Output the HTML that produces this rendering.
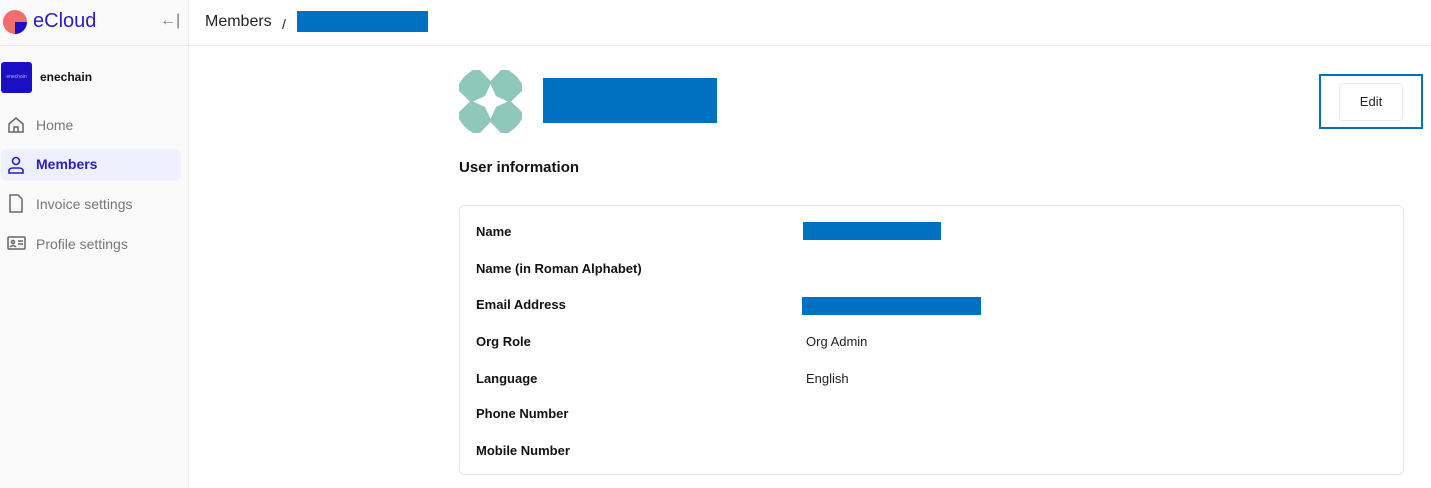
<!DOCTYPE html>
<html><head><style>
*{margin:0;padding:0;box-sizing:border-box}
body{width:1431px;height:488px;overflow:hidden;background:#fff;font-family:"Liberation Sans",Arial,sans-serif;position:relative}
.a{position:absolute}
.side{left:0;top:0;width:189px;height:488px;background:#fafafa;border-right:1px solid #ececec}
.nav{font-size:14px;color:#777}
.lbl{font-size:13px;font-weight:bold;color:#111;left:476px}
.val{font-size:13px;color:#222;left:806px}
.blue{background:#0070c0}
</style></head><body>
<div class="a side"></div>
<div class="a" style="left:0;top:45px;width:1431px;height:1px;background:#ececec"></div>
<svg class="a" style="left:3px;top:10px" width="24" height="24" viewBox="0 0 24 24"><circle cx="12" cy="12" r="12" fill="#f26d6d"/><path d="M12 12H24A12 12 0 0 1 12 24Z" fill="#1a0fc4"/></svg>
<div class="a" style="left:33px;top:10px;font-size:20px;color:#2a1cc0">eCloud</div>
<div class="a" style="left:160px;top:12px;font-size:16px;color:#777">&larr;|</div>
<div class="a" style="left:205px;top:13px;font-size:16px;color:#222">Members</div>
<div class="a" style="left:282px;top:16px;font-size:14px;color:#222">/</div>
<div class="a blue" style="left:297px;top:11px;width:131px;height:21px"></div>
<div class="a" style="left:1px;top:62px;width:31px;height:31px;background:#1a0fc4;border-radius:3px;color:#bbb;font-size:5px;line-height:31px;text-align:center">enechain</div>
<div class="a" style="left:40px;top:70px;font-size:12px;font-weight:bold;color:#111">enechain</div>
<div class="a" style="left:1px;top:149px;width:180px;height:32px;background:#eef0fd;border-radius:6px"></div>
<svg class="a" style="left:7px;top:116px" width="18" height="18" viewBox="0 0 18 18" fill="none" stroke="#666" stroke-width="1.5"><path d="M2 8L9 2L16 8V16H2Z M7 16V11H11V16"/></svg>
<div class="a nav" style="left:36px;top:117px">Home</div>
<svg class="a" style="left:7px;top:155px" width="18" height="20" viewBox="0 0 18 20" fill="none" stroke="#2a1cc0" stroke-width="1.6"><circle cx="9" cy="6" r="3.5"/><path d="M2 18V16Q2 13 6 13H12Q16 13 16 16V18Z"/></svg>
<div class="a" style="left:36px;top:156px;font-size:14px;font-weight:bold;color:#2a1cc0">Members</div>
<svg class="a" style="left:9px;top:194px" width="14" height="19" viewBox="0 0 14 19" fill="none" stroke="#666" stroke-width="1.5"><path d="M1 1H9L13 5V18H1Z"/></svg>
<div class="a nav" style="left:36px;top:196px">Invoice settings</div>
<svg class="a" style="left:7px;top:235px" width="19" height="16" viewBox="0 0 19 16" fill="none" stroke="#666" stroke-width="1.5"><rect x="1" y="2" width="17" height="12" rx="1"/><circle cx="6" cy="7" r="1.5"/><path d="M3 12Q6 9 9 12M11 6H16M11 9H16"/></svg>
<div class="a nav" style="left:36px;top:236px">Profile settings</div>
<svg class="a" style="left:459px;top:70px" width="63" height="63" viewBox="0 0 63 63">
<defs><clipPath id="c"><circle cx="31.5" cy="31.5" r="36"/></clipPath></defs>
<g clip-path="url(#c)">
<rect width="63" height="63" fill="#8fc7bb"/>
<path d="M0 21L11 31.5L0 42Z M63 21L52 31.5L63 42Z M21 0L31.5 11L42 0Z M21 63L31.5 52L42 63Z" fill="#fff"/>
<path d="M31.5 14L37 26L31.5 31.5L26 26Z M31.5 49L37 37L31.5 31.5L26 37Z M14 31.5L26 26L31.5 31.5L26 37Z M49 31.5L37 26L31.5 31.5L37 37Z" fill="#fff"/>
</g>
</svg>
<div class="a blue" style="left:543px;top:78px;width:174px;height:45px"></div>
<div class="a" style="left:1319px;top:74px;width:104px;height:55px;border:2px solid #0070c0"></div>
<div class="a" style="left:1339px;top:83px;width:64px;height:38px;border:1px solid #e8e8e8;border-radius:4px;font-size:13px;color:#222;text-align:center;line-height:36px">Edit</div>
<div class="a" style="left:459px;top:159px;font-size:15px;font-weight:bold;color:#111">User information</div>
<div class="a" style="left:459px;top:205px;width:945px;height:270px;border:1px solid #e6e6e6;border-radius:6px"></div>
<div class="a lbl" style="top:224px">Name</div>
<div class="a blue" style="left:803px;top:222px;width:138px;height:18px"></div>
<div class="a lbl" style="top:261px">Name (in Roman Alphabet)</div>
<div class="a lbl" style="top:297px">Email Address</div>
<div class="a blue" style="left:802px;top:297px;width:179px;height:18px"></div>
<div class="a lbl" style="top:334px">Org Role</div>
<div class="a val" style="top:334px">Org Admin</div>
<div class="a lbl" style="top:371px">Language</div>
<div class="a val" style="top:371px">English</div>
<div class="a lbl" style="top:406px">Phone Number</div>
<div class="a lbl" style="top:443px">Mobile Number</div>
</body></html>
